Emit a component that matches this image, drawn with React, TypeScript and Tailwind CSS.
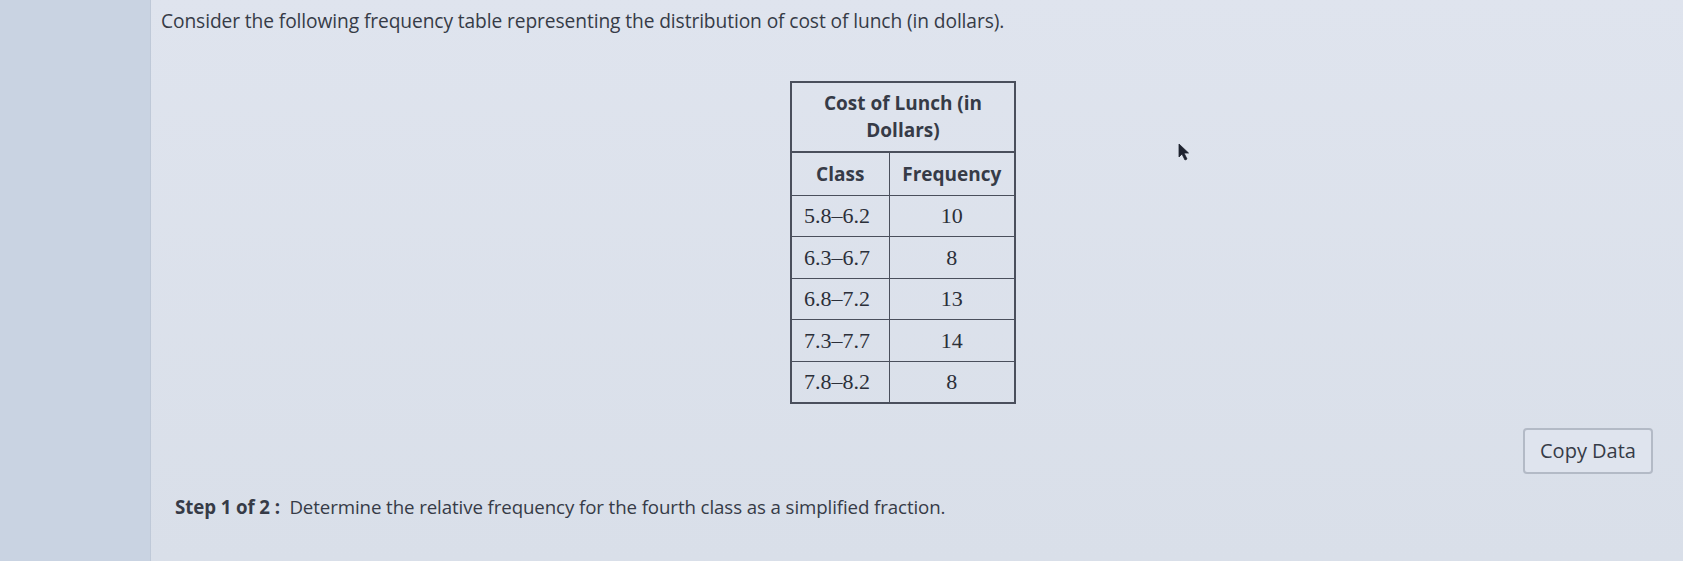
import React from "react";

const rows: [string, string][] = [
  ["5.8–6.2", "10"],
  ["6.3–6.7", "8"],
  ["6.8–7.2", "13"],
  ["7.3–7.7", "14"],
  ["7.8–8.2", "8"],
];

export default function App() {
  return (
    <div
      className="w-[1683px] h-[561px] flex overflow-hidden text-[#363b47]"
      style={{ fontFamily: '"Open Sans", "Liberation Sans", sans-serif' }}
    >
      <div className="w-[151px] shrink-0 h-full bg-[#c9d3e2] border-r border-[#bfc9d8]" />
      <div className="relative flex-1 h-full bg-gradient-to-b from-[#dfe4ee] to-[#d9dfe9] flex flex-col">
        <p className="pl-[10px] pt-[8px] text-[19.2px] leading-[26px] tracking-[-0.1px]">
          Consider the following frequency table representing the distribution of cost of lunch (in dollars).
        </p>

        <table className="ml-[639px] mt-[47px] w-[226px] border-collapse border-2 border-[#4a4f5c]">
          <thead>
            <tr className="h-[70px]">
              <th
                colSpan={2}
                className="border-2 border-[#4a4f5c] text-[19px] leading-[27px] font-bold text-[#363b47] px-1"
              >
                Cost of Lunch (in
                <br />
                Dollars)
              </th>
            </tr>
            <tr className="h-[43px]">
              <th className="w-[98px] border border-[#4a4f5c] text-[19px] font-bold">Class</th>
              <th className="border border-[#4a4f5c] text-[19px] font-bold px-0">Frequency</th>
            </tr>
          </thead>
          <tbody style={{ fontFamily: '"Liberation Serif", "Times New Roman", serif' }}>
            {rows.map(([c, f]) => (
              <tr key={c} className="h-[41.6px]">
                <td className="border border-[#4a4f5c] pl-[12px] text-[22px] text-[#2b2f39]">{c}</td>
                <td className="border border-[#4a4f5c] text-center text-[22px] text-[#2b2f39]">{f}</td>
              </tr>
            ))}
          </tbody>
        </table>

        <div className="flex justify-end pr-[30px] mt-[24px]">
          <button className="w-[130px] h-[46px] rounded-[4px] border-2 border-[#b3bac6] bg-[#dfe4ee] text-[20px] text-[#363b47]">
            Copy Data
          </button>
        </div>

        <p className="pl-[24px] mt-[20px] text-[18.7px] leading-[26px] tracking-[-0.1px]">
          <span className="font-bold">Step 1 of 2 :</span>&nbsp; Determine the relative frequency for the fourth class as a simplified fraction.
        </p>

        <svg
          className="absolute left-[1027px] top-[143px]"
          width="12"
          height="18"
          viewBox="0 0 12 18"
        >
          <path d="M1 1 L1 14 L4 11 L7 17 L9 16 L6 10 L10.5 10 Z" fill="#1f2330" stroke="#1f2330" strokeWidth="0.8" />
        </svg>
      </div>
    </div>
  );
}
